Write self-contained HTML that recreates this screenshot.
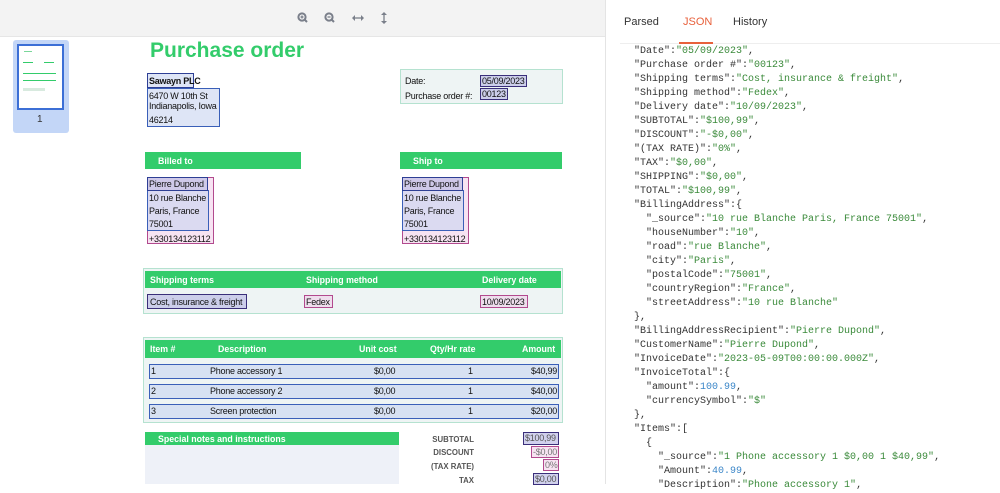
<!DOCTYPE html>
<html><head><meta charset="utf-8"><style>
*{margin:0;padding:0;box-sizing:border-box}
body{width:1000px;height:484px;overflow:hidden;background:#fff;font-family:"Liberation Sans",Arial,sans-serif;position:relative}
.a{position:absolute}
.t{position:absolute;font-size:9px;color:#111;white-space:nowrap;line-height:1;letter-spacing:-0.25px}
.g{background:#33cc6b}
.gh{position:absolute;color:#fff;font-weight:bold;font-size:8.8px;white-space:nowrap}
.bx{position:absolute;border:1.5px solid #3a5fb8;background:rgba(200,212,240,.6)}
.pk{position:absolute;border:1.5px solid #b24a8e;background:rgba(240,200,230,.5)}
.dk{position:absolute;border:1.5px solid #3a2f7a;background:rgba(190,190,230,.7)}
.tl{position:absolute;font-size:7.8px;font-weight:bold;color:#555;text-align:right;width:80px;left:394px}
.j{position:absolute;left:634px;font-family:"Liberation Mono",monospace;font-size:10px;color:#333;white-space:pre;line-height:14px}
.s{color:#3a8a3a}.n{color:#3a86c8}
</style></head><body>
<div class="a" style="left:0;top:0;width:605px;height:37px;background:#f3f3f3;border-bottom:1px solid #e6e6e6"></div>
<svg class="a" style="left:295px;top:11px" width="100" height="14" viewBox="0 0 100 14">
<g fill="none" stroke="#7a7f8a" stroke-width="2"><circle cx="7" cy="6" r="3.6"/><line x1="9.5" y1="8.5" x2="12" y2="11"/><circle cx="34" cy="6" r="3.6"/><line x1="36.5" y1="8.5" x2="39" y2="11"/></g>
<g stroke="#7a7f8a" stroke-width="1.3"><line x1="5.5" y1="6" x2="8.5" y2="6"/><line x1="7" y1="4.5" x2="7" y2="7.5"/><line x1="32.5" y1="6" x2="35.5" y2="6"/>
<line x1="58" y1="7" x2="68" y2="7"/><line x1="89" y1="2" x2="89" y2="12"/></g>
<g fill="#7a7f8a"><path d="M57 7l3-3v6zM69 7l-3-3v6zM89 1l-3 3h6zM89 13l-3-3h6z"/></g></svg>
<div class="a" style="left:13px;top:40px;width:56px;height:93px;background:#c3d6f7;border-radius:3px"></div>
<div class="a" style="left:17px;top:44px;width:47px;height:66px;background:#fff;border:2px solid #3c6fd6"></div>
<div class="a" style="left:24px;top:51px;width:8px;height:1px;background:#7ad79a"></div>
<div class="a" style="left:23px;top:62px;width:10px;height:1px;background:#33cc6b"></div>
<div class="a" style="left:44px;top:62px;width:10px;height:1px;background:#33cc6b"></div>
<div class="a" style="left:23px;top:73px;width:33px;height:1px;background:#33cc6b"></div>
<div class="a" style="left:23px;top:80px;width:33px;height:1px;background:#33cc6b"></div>
<div class="a" style="left:23px;top:88px;width:22px;height:3px;background:#d8eadf"></div>
<div class="t" style="left:37px;top:115px;font-size:10px;color:#333">1</div>
<div class="a" style="left:605px;top:0;width:1px;height:484px;background:#e4e4e4"></div>

<div class="t" style="left:150px;top:40px;font-size:21px;font-weight:bold;color:#33cc6b;letter-spacing:0">Purchase order</div>
<div class="dk" style="left:147px;top:73px;width:47px;height:15px;border-color:#2e3f95;background:rgba(200,212,240,.6)"></div>
<div class="t" style="left:149px;top:77px;font-weight:bold">Sawayn PLC</div>
<div class="bx" style="left:147px;top:88px;width:73px;height:39px"></div>
<div class="t" style="left:149px;top:92px">6470 W 10th St</div>
<div class="t" style="left:149px;top:102px">Indianapolis, Iowa</div>
<div class="t" style="left:149px;top:116px">46214</div>

<div class="a" style="left:400px;top:69px;width:163px;height:35px;border:1px solid #b5e2d0;background:#eef4f4"></div>
<div class="t" style="left:405px;top:77px">Date:</div>
<div class="t" style="left:405px;top:92px">Purchase order #:</div>
<div class="dk" style="left:480px;top:75px;width:47px;height:12px"></div>
<div class="t" style="left:482px;top:77px">05/09/2023</div>
<div class="dk" style="left:480px;top:88px;width:28px;height:12px"></div>
<div class="t" style="left:482px;top:90px">00123</div>

<div class="a g" style="left:145px;top:152px;width:156px;height:17px"></div>
<div class="gh" style="left:158px;top:156px">Billed to</div>
<div class="a g" style="left:400px;top:152px;width:162px;height:17px"></div>
<div class="gh" style="left:413px;top:156px">Ship to</div>

<div class="pk" style="left:147px;top:177px;width:67px;height:67px"></div>
<div class="bx" style="left:147px;top:190px;width:62px;height:41px"></div>
<div class="dk" style="left:147px;top:177px;width:61px;height:14px;border-color:#2e3f95"></div>
<div class="t" style="left:149px;top:180px">Pierre Dupond</div>
<div class="t" style="left:149px;top:194px">10 rue Blanche</div>
<div class="t" style="left:149px;top:207px">Paris, France</div>
<div class="t" style="left:149px;top:220px">75001</div>
<div class="t" style="left:149px;top:235px">+330134123112</div>

<div class="pk" style="left:402px;top:177px;width:67px;height:67px"></div>
<div class="bx" style="left:402px;top:190px;width:62px;height:41px"></div>
<div class="dk" style="left:402px;top:177px;width:61px;height:14px;border-color:#2e3f95"></div>
<div class="t" style="left:404px;top:180px">Pierre Dupond</div>
<div class="t" style="left:404px;top:194px">10 rue Blanche</div>
<div class="t" style="left:404px;top:207px">Paris, France</div>
<div class="t" style="left:404px;top:220px">75001</div>
<div class="t" style="left:404px;top:235px">+330134123112</div>

<div class="a" style="left:143px;top:268px;width:420px;height:46px;border:1px solid #b5e2d0;background:#eef4f4"></div>
<div class="a g" style="left:145px;top:271px;width:416px;height:17px"></div>
<div class="gh" style="left:150px;top:275px">Shipping terms</div>
<div class="gh" style="left:306px;top:275px">Shipping method</div>
<div class="gh" style="left:482px;top:275px">Delivery date</div>
<div class="dk" style="left:147px;top:294px;width:100px;height:15px"></div>
<div class="t" style="left:150px;top:298px">Cost, insurance &amp; freight</div>
<div class="pk" style="left:304px;top:295px;width:29px;height:13px"></div>
<div class="t" style="left:306px;top:298px">Fedex</div>
<div class="pk" style="left:480px;top:295px;width:48px;height:13px"></div>
<div class="t" style="left:482px;top:298px">10/09/2023</div>

<div class="a" style="left:143px;top:337px;width:420px;height:86px;border:1px solid #b5e2d0;background:#eef4f4"></div>
<div class="a g" style="left:145px;top:340px;width:416px;height:18px"></div>
<div class="gh" style="left:150px;top:344px">Item #</div>
<div class="gh" style="left:218px;top:344px">Description</div>
<div class="gh" style="left:359px;top:344px">Unit cost</div>
<div class="gh" style="left:430px;top:344px">Qty/Hr rate</div>
<div class="gh" style="left:522px;top:344px">Amount</div>
<div class="bx" style="left:149px;top:364px;width:410px;height:15px"></div>
<div class="bx" style="left:149px;top:384px;width:410px;height:15px"></div>
<div class="bx" style="left:149px;top:404px;width:410px;height:15px"></div>
<div class="t" style="left:151px;top:367px">1</div><div class="t" style="left:210px;top:367px">Phone accessory 1</div><div class="t" style="left:374px;top:367px">$0,00</div><div class="t" style="left:468px;top:367px">1</div><div class="t" style="left:531px;top:367px">$40,99</div>
<div class="t" style="left:151px;top:387px">2</div><div class="t" style="left:210px;top:387px">Phone accessory 2</div><div class="t" style="left:374px;top:387px">$0,00</div><div class="t" style="left:468px;top:387px">1</div><div class="t" style="left:531px;top:387px">$40,00</div>
<div class="t" style="left:151px;top:407px">3</div><div class="t" style="left:210px;top:407px">Screen protection</div><div class="t" style="left:374px;top:407px">$0,00</div><div class="t" style="left:468px;top:407px">1</div><div class="t" style="left:531px;top:407px">$20,00</div>

<div class="a g" style="left:145px;top:432px;width:254px;height:13px"></div>
<div class="gh" style="left:158px;top:434px">Special notes and instructions</div>
<div class="a" style="left:145px;top:445px;width:254px;height:39px;background:#eef1f8"></div>
<div class="tl" style="top:435px">SUBTOTAL</div>
<div class="tl" style="top:448px">DISCOUNT</div>
<div class="tl" style="top:462px">(TAX RATE)</div>
<div class="tl" style="top:476px">TAX</div>
<div class="dk" style="left:523px;top:432px;width:36px;height:13px"></div><div class="t" style="left:525px;top:434px;color:#555">$100,99</div>
<div class="pk" style="left:531px;top:446px;width:28px;height:12px"></div><div class="t" style="left:533px;top:448px;color:#777">-$0,00</div>
<div class="pk" style="left:543px;top:459px;width:16px;height:12px"></div><div class="t" style="left:545px;top:461px;color:#777">0%</div>
<div class="dk" style="left:533px;top:473px;width:26px;height:12px"></div><div class="t" style="left:535px;top:475px;color:#555">$0,00</div>

<div class="t" style="left:624px;top:17px;font-size:11px;color:#333;letter-spacing:0">Parsed</div>
<div class="t" style="left:683px;top:17px;font-size:11px;color:#e8613c;letter-spacing:0">JSON</div>
<div class="t" style="left:733px;top:17px;font-size:11px;color:#333;letter-spacing:0">History</div>
<div class="a" style="left:620px;top:43px;width:380px;height:1px;background:#eee"></div>
<div class="a" style="left:679px;top:42px;width:34px;height:2px;background:#e8613c"></div>

<div class="j" style="top:45px">"Date":<span class="s">"05/09/2023"</span>,
"Purchase order #":<span class="s">"00123"</span>,
"Shipping terms":<span class="s">"Cost, insurance &amp; freight"</span>,
"Shipping method":<span class="s">"Fedex"</span>,
"Delivery date":<span class="s">"10/09/2023"</span>,
"SUBTOTAL":<span class="s">"$100,99"</span>,
"DISCOUNT":<span class="s">"-$0,00"</span>,
"(TAX RATE)":<span class="s">"0%"</span>,
"TAX":<span class="s">"$0,00"</span>,
"SHIPPING":<span class="s">"$0,00"</span>,
"TOTAL":<span class="s">"$100,99"</span>,
"BillingAddress":{
  "_source":<span class="s">"10 rue Blanche Paris, France 75001"</span>,
  "houseNumber":<span class="s">"10"</span>,
  "road":<span class="s">"rue Blanche"</span>,
  "city":<span class="s">"Paris"</span>,
  "postalCode":<span class="s">"75001"</span>,
  "countryRegion":<span class="s">"France"</span>,
  "streetAddress":<span class="s">"10 rue Blanche"</span>
},
"BillingAddressRecipient":<span class="s">"Pierre Dupond"</span>,
"CustomerName":<span class="s">"Pierre Dupond"</span>,
"InvoiceDate":<span class="s">"2023-05-09T00:00:00.000Z"</span>,
"InvoiceTotal":{
  "amount":<span class="n">100.99</span>,
  "currencySymbol":<span class="s">"$"</span>
},
"Items":[
  {
    "_source":<span class="s">"1 Phone accessory 1 $0,00 1 $40,99"</span>,
    "Amount":<span class="n">40.99</span>,
    "Description":<span class="s">"Phone accessory 1"</span>,</div>
</body></html>
